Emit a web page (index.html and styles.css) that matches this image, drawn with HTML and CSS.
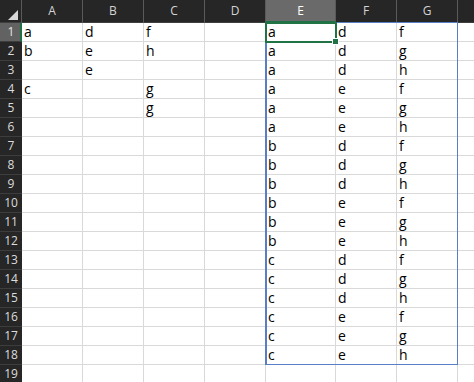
FILE: index.html
```html
<!DOCTYPE html>
<html>
<head>
<meta charset="utf-8">
<link rel="stylesheet" href="styles.css">
</head>
<body>
<div class="sheet">
  <div class="row hdr">
    <div class="corner"><span class="tri"></span></div>
    <div class="ch">A</div><div class="ch">B</div><div class="ch">C</div><div class="ch">D</div>
    <div class="ch sel">E</div><div class="ch">F</div><div class="ch">G</div><div class="ch last"></div>
  </div>
  <div class="row"><div class="rh sel">1</div><div class="c">a</div><div class="c">d</div><div class="c">f</div><div class="c"></div><div class="c">a</div><div class="c">d</div><div class="c">f</div><div class="c last"></div></div>
  <div class="row"><div class="rh">2</div><div class="c">b</div><div class="c">e</div><div class="c">h</div><div class="c"></div><div class="c">a</div><div class="c">d</div><div class="c">g</div><div class="c last"></div></div>
  <div class="row"><div class="rh">3</div><div class="c"></div><div class="c">e</div><div class="c"></div><div class="c"></div><div class="c">a</div><div class="c">d</div><div class="c">h</div><div class="c last"></div></div>
  <div class="row"><div class="rh">4</div><div class="c">c</div><div class="c"></div><div class="c">g</div><div class="c"></div><div class="c">a</div><div class="c">e</div><div class="c">f</div><div class="c last"></div></div>
  <div class="row"><div class="rh">5</div><div class="c"></div><div class="c"></div><div class="c">g</div><div class="c"></div><div class="c">a</div><div class="c">e</div><div class="c">g</div><div class="c last"></div></div>
  <div class="row"><div class="rh">6</div><div class="c"></div><div class="c"></div><div class="c"></div><div class="c"></div><div class="c">a</div><div class="c">e</div><div class="c">h</div><div class="c last"></div></div>
  <div class="row"><div class="rh">7</div><div class="c"></div><div class="c"></div><div class="c"></div><div class="c"></div><div class="c">b</div><div class="c">d</div><div class="c">f</div><div class="c last"></div></div>
  <div class="row"><div class="rh">8</div><div class="c"></div><div class="c"></div><div class="c"></div><div class="c"></div><div class="c">b</div><div class="c">d</div><div class="c">g</div><div class="c last"></div></div>
  <div class="row"><div class="rh">9</div><div class="c"></div><div class="c"></div><div class="c"></div><div class="c"></div><div class="c">b</div><div class="c">d</div><div class="c">h</div><div class="c last"></div></div>
  <div class="row"><div class="rh">10</div><div class="c"></div><div class="c"></div><div class="c"></div><div class="c"></div><div class="c">b</div><div class="c">e</div><div class="c">f</div><div class="c last"></div></div>
  <div class="row"><div class="rh">11</div><div class="c"></div><div class="c"></div><div class="c"></div><div class="c"></div><div class="c">b</div><div class="c">e</div><div class="c">g</div><div class="c last"></div></div>
  <div class="row"><div class="rh">12</div><div class="c"></div><div class="c"></div><div class="c"></div><div class="c"></div><div class="c">b</div><div class="c">e</div><div class="c">h</div><div class="c last"></div></div>
  <div class="row"><div class="rh">13</div><div class="c"></div><div class="c"></div><div class="c"></div><div class="c"></div><div class="c">c</div><div class="c">d</div><div class="c">f</div><div class="c last"></div></div>
  <div class="row"><div class="rh">14</div><div class="c"></div><div class="c"></div><div class="c"></div><div class="c"></div><div class="c">c</div><div class="c">d</div><div class="c">g</div><div class="c last"></div></div>
  <div class="row"><div class="rh">15</div><div class="c"></div><div class="c"></div><div class="c"></div><div class="c"></div><div class="c">c</div><div class="c">d</div><div class="c">h</div><div class="c last"></div></div>
  <div class="row"><div class="rh">16</div><div class="c"></div><div class="c"></div><div class="c"></div><div class="c"></div><div class="c">c</div><div class="c">e</div><div class="c">f</div><div class="c last"></div></div>
  <div class="row"><div class="rh">17</div><div class="c"></div><div class="c"></div><div class="c"></div><div class="c"></div><div class="c">c</div><div class="c">e</div><div class="c">g</div><div class="c last"></div></div>
  <div class="row"><div class="rh">18</div><div class="c"></div><div class="c"></div><div class="c"></div><div class="c"></div><div class="c">c</div><div class="c">e</div><div class="c">h</div><div class="c last"></div></div>
  <div class="row"><div class="rh">19</div><div class="c"></div><div class="c"></div><div class="c"></div><div class="c"></div><div class="c"></div><div class="c"></div><div class="c"></div><div class="c last"></div></div>

  <div class="range"></div>
  <div class="active"><span class="handle"></span></div>
</div>
</body>
</html>
```

FILE: styles.css
```css
html, body {
  margin: 0;
  padding: 0;
  background: #ffffff;
  overflow: hidden;
}
.sheet {
  position: relative;
  width: 474px;
  height: 382px;
  overflow: hidden;
  font-family: "Open Sans", "Noto Sans", sans-serif;
}
.row {
  display: grid;
  grid-template-columns: 22px 61px 61px 61px 61px 70px 61px 61px 1fr;
  height: 19px;
}
.row.hdr {
  height: 23px;
  background: #262626;
  border-bottom: 1px solid #3e3e3e;
  box-sizing: border-box;
}
.corner {
  border-right: 1px solid #5a5a5a;
  position: relative;
}
.tri {
  position: absolute;
  right: 3px;
  bottom: 3px;
  width: 0;
  height: 0;
  border-left: 10px solid transparent;
  border-bottom: 10px solid #d8d8d8;
}
.ch {
  color: #d4d4d4;
  font-size: 12px;
  text-align: center;
  line-height: 22px;
  border-right: 1px solid #5a5a5a;
}
.ch.last { border-right: none; }
.ch.sel {
  background: #6a6a6a;
  color: #ffffff;
  border-bottom: 2px solid #1e7145;
  line-height: 21px;
  box-sizing: border-box;
}
.rh {
  background: #262626;
  color: #dcdcdc;
  font-size: 12px;
  text-align: center;
  line-height: 18px;
  border-bottom: 1px solid #3d3d3d;
  box-sizing: border-box;
}
.rh.sel {
  background: #626262;
  color: #e8e8e8;
  border-right: 2px solid #1e7145;
  padding-left: 2px;
}
.c {
  box-sizing: border-box;
  border-right: 1px solid #d9d9d9;
  border-bottom: 1px solid #d9d9d9;
  color: #000000;
  font-size: 14px;
  line-height: 18px;
  padding-left: 2px;
  overflow: hidden;
  white-space: nowrap;
}
.c.last { border-right: none; }
.range {
  position: absolute;
  left: 265px;
  top: 22px;
  width: 193px;
  height: 343px;
  box-sizing: border-box;
  border: 1px solid #5a7ec6;
  border-left-width: 2px;
}
.active {
  position: absolute;
  left: 265px;
  top: 22px;
  width: 72px;
  height: 21px;
  box-sizing: border-box;
  border: 2px solid #217346;
}
.handle {
  position: absolute;
  right: -4px;
  bottom: -4px;
  width: 5px;
  height: 5px;
  background: #217346;
  border: 1px solid #ffffff;
}
```
